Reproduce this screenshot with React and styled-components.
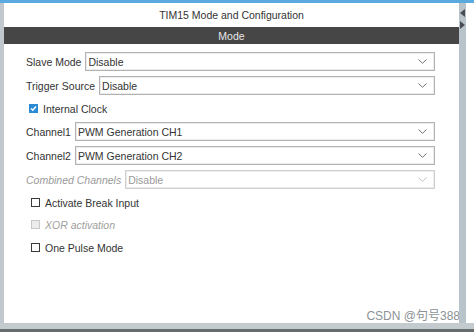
import React from 'react';
import styled, {createGlobalStyle} from 'styled-components';

const GlobalStyle = createGlobalStyle`
  html, body {
    margin: 0;
    padding: 0;
    background: #ffffff;
  }
  body {
    font-family: "Liberation Sans", Arial, sans-serif;
  }
`

// STYLED COMPONENTS START
const Screen = styled.div`
  position: relative;
  width: 474px;
  height: 332px;
  display: flex;
  flex-direction: column;
  overflow: hidden;
`

const TopStrip = styled.div`
  height: 3px;
  background: #5aa9df;
`

const Middle = styled.div`
  flex: 1;
  display: flex;
`

const SideStrip = styled.div`
  width: ${p => p.w}px;
  background: ${p => p.color};
  display: flex;
  flex-direction: column;
  align-items: center;
  padding-top: 6px;
  gap: 4px;
`

const Arrow = styled.div`
  width: 0;
  height: 0;
  border-top: 4px solid transparent;
  border-bottom: 4px solid transparent;
  ${p => p.dir === 'left'
    ? 'border-right: 5px solid #4a4e52;'
    : 'border-left: 5px solid #4a4e52;'}
`

const Panel = styled.div`
  flex: 1;
  background: #ffffff;
  display: flex;
  flex-direction: column;
`

const Title = styled.div`
  height: 24px;
  display: flex;
  align-items: center;
  justify-content: center;
  font-size: 10.5px;
  color: #333;
`

const SectionHeader = styled.div`
  height: 17px;
  background: #464646;
  color: #e8e8e8;
  font-size: 10.5px;
  display: flex;
  align-items: center;
  justify-content: center;
`

const Form = styled.div`
  display: flex;
  flex-direction: column;
  gap: 5px;
  padding: 8px 24px 0 22px;
`

const Row = styled.div`
  height: 19px;
  display: flex;
  align-items: center;
  gap: 4px;
  font-size: 10.5px;
  color: ${p => p.disabled ? '#9a9a9a' : '#333'};
  font-style: ${p => p.disabled ? 'italic' : 'normal'};
`

const Label = styled.span`
  white-space: nowrap;
`

const Select = styled.div`
  flex: 1;
  height: 19px;
  box-sizing: border-box;
  border: 1px solid ${p => p.disabled ? '#cfcfcf' : '#b2b2b2'};
  box-shadow: inset 0 0 0 1px #ececec;
  display: flex;
  align-items: center;
  justify-content: space-between;
  padding: 0 7px 0 2px;
  font-style: normal;
  color: ${p => p.disabled ? '#9a9a9a' : '#333'};
`

const CheckRow = styled.div`
  height: 17px;
  margin-top: ${p => p.push || 0}px;
  display: flex;
  align-items: center;
  gap: 5px;
  padding-left: ${p => p.indent}px;
  font-size: 10.5px;
  color: ${p => p.disabled ? '#a0a0a0' : '#333'};
  font-style: ${p => p.disabled ? 'italic' : 'normal'};
`

const Box = styled.div`
  width: 9px;
  height: 9px;
  box-sizing: border-box;
  border: 1px solid ${p => p.checked ? '#2a8bd3' : p.disabled ? '#c8c8c8' : '#3a3a3a'};
  background: ${p => p.checked ? '#2a8bd3' : p.disabled ? '#ececec' : '#fff'};
  display: flex;
  align-items: center;
  justify-content: center;
`

const BottomLight = styled.div`
  height: 6px;
  background: #c3cbcf;
`

const BottomDark = styled.div`
  height: 3px;
  background: #676c6e;
`

const Watermark = styled.div`
  position: absolute;
  right: 14px;
  bottom: 9px;
  font-family: "Liberation Sans", "Noto Sans CJK SC", sans-serif;
  font-size: 12px;
  color: #8d9296;
  text-shadow: 0 0 1px #fff;
`
// STYLED COMPONENTS END

const Chevron = ({disabled}) => (
  <svg width="9" height="5" viewBox="0 0 9 5">
    <path d="M0.5 0.5 L4.5 4.3 L8.5 0.5" fill="none"
      stroke={disabled ? '#c4c4c4' : '#707070'} strokeWidth="1"/>
  </svg>
)

const Dropdown = ({label, value, disabled}) => (
  <Row disabled={disabled}>
    <Label>{label}</Label>
    <Select disabled={disabled}>
      <span>{value}</span>
      <Chevron disabled={disabled}/>
    </Select>
  </Row>
)

const Check = ({label, checked, disabled, indent, push}) => (
  <CheckRow disabled={disabled} indent={indent} push={push}>
    <Box checked={checked} disabled={disabled}>
      {checked && (
        <svg width="7" height="7" viewBox="0 0 7 7">
          <path d="M1 3.6 L2.8 5.3 L6 1.5" fill="none" stroke="#fff" strokeWidth="1.4"/>
        </svg>
      )}
    </Box>
    <span>{label}</span>
  </CheckRow>
)

const App = () => {
  return(
    <Screen>
      <GlobalStyle/>
      <TopStrip/>
      <Middle>
        <SideStrip w={4} color="#c0c8ce"/>
        <Panel>
          <Title>TIM15 Mode and Configuration</Title>
          <SectionHeader>Mode</SectionHeader>
          <Form>
            <Dropdown label="Slave Mode" value="Disable"/>
            <Dropdown label="Trigger Source" value="Disable"/>
            <Check label="Internal Clock" checked indent={3}/>
            <Dropdown label="Channel1" value="PWM Generation CH1"/>
            <Dropdown label="Channel2" value="PWM Generation CH2"/>
            <Dropdown label="Combined Channels" value="Disable" disabled/>
            <Check label="Activate Break Input" indent={5}/>
            <Check label="XOR activation" disabled indent={5}/>
            <Check label="One Pulse Mode" indent={5} push={1}/>
          </Form>
        </Panel>
        <SideStrip w={7} color="#b9c3ca">
          <Arrow dir="left"/>
          <Arrow dir="right"/>
        </SideStrip>
        <SideStrip w={8} color="#ffffff"/>
      </Middle>
      <BottomLight/>
      <BottomDark/>
      <Watermark>CSDN @句号388</Watermark>
    </Screen>
  )
}

export default App;
